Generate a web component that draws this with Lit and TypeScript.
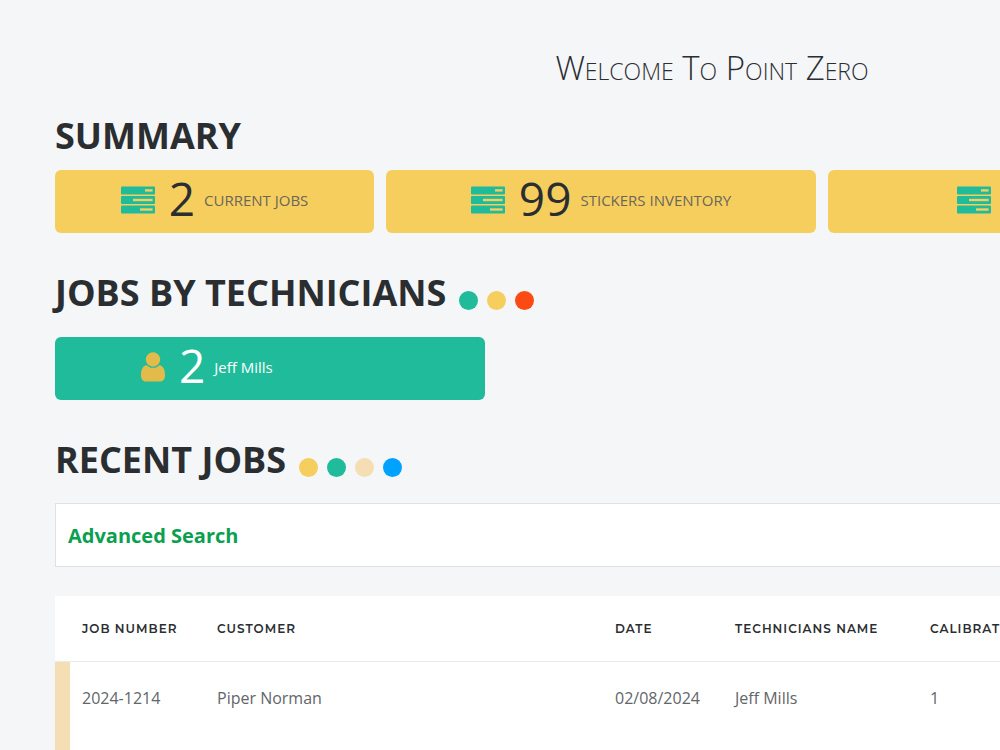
import { LitElement, html, css, svg } from "lit";
import { customElement } from "lit/decorators.js";

interface Job {
  number: string;
  customer: string;
  date: string;
  technician: string;
  calibrated: number;
}

const serverIcon = svg`
  <svg class="icon-server" viewBox="0 0 34 28" aria-hidden="true">
    <g class="unit">
      <rect x="0" y="0.5" width="34" height="8" rx="1" />
      <rect x="0" y="10" width="34" height="8" rx="1" />
      <rect x="0" y="19.5" width="34" height="8" rx="1" />
    </g>
    <g class="slot">
      <rect x="24" y="3.2" width="7.6" height="2.4" />
      <rect x="12" y="12.8" width="19.6" height="2.4" />
      <rect x="19" y="22.3" width="12.6" height="2.4" />
    </g>
  </svg>`;

const userIcon = svg`
  <svg class="icon-user" viewBox="0 0 24 30" aria-hidden="true">
    <path d="M5.7 13.2C1.6 13.6 0 18.200 0 23.400C0 27 2 29.500 5.300 29.500H18.700C22 29.500 24 27 24 23.400C24 18.200 22.400 13.600 18.300 13.200C16.600 14.900 14.500 15.800 12 15.800S7.400 14.900 5.700 13.200Z" />
    <circle cx="12" cy="7.500" r="7.200" />
  </svg>`;

@customElement("app-root")
export class AppRoot extends LitElement {
  private jobs: Job[] = [
    { number: "2024-1214", customer: "Piper Norman", date: "02/08/2024", technician: "Jeff Mills", calibrated: 1 },
  ];

  static styles = css`
    :host {
      display: block;
      min-height: 100vh;
      overflow: hidden;
      background: #f5f6f8;
      color: #2b2e31;
      font-family: "Segoe UI", "Open Sans", "Noto Sans", sans-serif;
    }
    .page {
      min-width: 1314px;
      padding: 48px 55px 0;
    }
    h1, h2 { margin: 0; }
    h1 {
      text-align: center;
      font-size: 33px;
      line-height: 40px;
      font-weight: 300;
      font-variant-caps: small-caps;
    }
    h2 {
      font-size: 36px;
      line-height: 48px;
      font-weight: 700;
    }
    .heading {
      display: flex;
      align-items: center;
      gap: 13px;
    }
    .summary { margin-top: 24px; }
    .block { margin-top: 36px; }
    .dots {
      display: flex;
      gap: 9px;
      padding-top: 15px;
    }
    .dot {
      width: 19px;
      height: 19px;
      border-radius: 50%;
    }
    .green { background: #1fbb9a; }
    .yellow { background: #f6ce5e; }
    .red { background: #fc4a14; }
    .wheat { background: #f5deb3; }
    .blue { background: #00a2ff; }
    .cards {
      display: grid;
      grid-template-columns: 319fr 430fr 541fr;
      gap: 12px;
      margin-top: 10px;
    }
    .cards.people {
      grid-template-columns: 430fr 872fr;
      margin-top: 20px;
    }
    .card {
      display: flex;
      align-items: center;
      justify-content: center;
      box-sizing: border-box;
      height: 63px;
      padding-bottom: 4px;
      border-radius: 6px;
      background: #f6ce5e;
    }
    .card.open {
      justify-content: flex-start;
      padding-left: 129px;
    }
    .card.person {
      background: #1fbb9a;
      color: #fff;
      justify-content: flex-start;
      padding-left: 86px;
    }
    .icon-server { width: 34px; height: 28px; }
    .icon-user { width: 24px; height: 30px; }
    .unit { fill: #1fbb9a; }
    .slot { fill: #f6ce5e; }
    .icon-user { fill: #e3bb4b; }
    .count {
      margin-left: 14px;
      padding-bottom: 4px;
      font-size: 46px;
      line-height: 52px;
    }
    .label {
      margin-left: 9px;
      font-size: 15px;
      line-height: 20px;
      color: #6b665b;
    }
    .person .label { color: #fff; }
    .search {
      margin-top: 19px;
      padding: 18px 12px 16px;
      background: #fff;
      border: 1px solid #dfe2e5;
    }
    .search button {
      display: block;
      padding: 0;
      border: 0;
      background: none;
      color: #0aa04f;
      font: inherit;
      font-size: 20px;
      line-height: 28px;
      font-weight: 700;
    }
    table {
      width: 100%;
      margin-top: 29px;
      border-collapse: separate;
      border-spacing: 0;
      table-layout: fixed;
      background: #fff;
      text-align: left;
    }
    th {
      height: 65px;
      padding: 0;
      border-bottom: 1px solid #e8ebed;
      font-family: Montserrat, Inter, sans-serif;
      font-size: 12px;
      font-weight: 600;
      letter-spacing: 1px;
    }
    td {
      padding: 24px 0 66px;
      font-size: 16px;
      line-height: 24px;
      color: #62666a;
    }
    th:first-child { padding-left: 27px; }
    td:first-child {
      padding-left: 12px;
      border-left: 15px solid #f5deb3;
    }
    .c-number { width: 162px; }
    .c-customer { width: 398px; }
    .c-date { width: 120px; }
    .c-tech { width: 195px; }
  `;

  render() {
    return html`
      <main class="page">
        <h1>Welcome To Point Zero</h1>

        <section class="summary">
          <h2>SUMMARY</h2>
          <div class="cards">
            <div class="card">${serverIcon}<span class="count">2</span><span class="label">CURRENT JOBS</span></div>
            <div class="card">${serverIcon}<span class="count">99</span><span class="label">STICKERS INVENTORY</span></div>
            <div class="card open">${serverIcon}</div>
          </div>
        </section>

        <section class="block">
          <div class="heading">
            <h2>JOBS BY TECHNICIANS</h2>
            <div class="dots">${["green", "yellow", "red"].map((c) => html`<span class="dot ${c}"></span>`)}</div>
          </div>
          <div class="cards people">
            <div class="card person">${userIcon}<span class="count">2</span><span class="label">Jeff Mills</span></div>
          </div>
        </section>

        <section class="block">
          <div class="heading">
            <h2>RECENT JOBS</h2>
            <div class="dots">${["yellow", "green", "wheat", "blue"].map((c) => html`<span class="dot ${c}"></span>`)}</div>
          </div>
          <div class="search"><button type="button">Advanced Search</button></div>
          <table>
            <colgroup>
              <col class="c-number" /><col class="c-customer" /><col class="c-date" /><col class="c-tech" /><col />
            </colgroup>
            <thead>
              <tr>
                <th>JOB NUMBER</th>
                <th>CUSTOMER</th>
                <th>DATE</th>
                <th>TECHNICIANS NAME</th>
                <th>CALIBRATIONS</th>
              </tr>
            </thead>
            <tbody>
              ${this.jobs.map(
                (job) => html`<tr>
                  <td>${job.number}</td>
                  <td>${job.customer}</td>
                  <td>${job.date}</td>
                  <td>${job.technician}</td>
                  <td>${job.calibrated}</td>
                </tr>`
              )}
            </tbody>
          </table>
        </section>
      </main>
    `;
  }
}
